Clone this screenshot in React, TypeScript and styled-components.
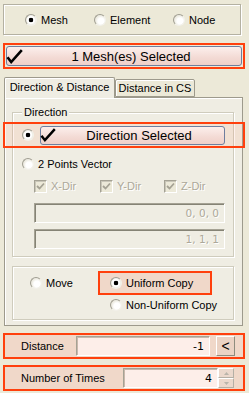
import React from 'react';
import styled, { createGlobalStyle, css } from 'styled-components';

const ORANGE = '#FF400D';
const PEACH = '#F0D8C9';
const BG = '#ECE9D8';
const DISABLED = '#ACA899';

const Global = createGlobalStyle`
  html, body { margin: 0; padding: 0; background: ${BG}; }
  body { font-family: "Liberation Sans", "DejaVu Sans", Arial, sans-serif; font-size: 11px; color: #000; }
  * { box-sizing: border-box; }
`;

const Page = styled.div`
  width: 249px;
  height: 393px;
  overflow: hidden;
  padding-top: 4px;
  display: flex;
  flex-direction: column;
`;

const TopGroup = styled.div`
  margin-left: 3px;
  width: 238px;
  height: 31px;
  border: 1px solid #B4B1A2;
  box-shadow: inset 1px 1px 0 #fff, 1px 1px 0 #fff;
  display: flex;
  align-items: center;
  padding-left: 21px;
`;

const Option = styled.label<{ $w?: number; $disabled?: boolean }>`
  display: flex;
  align-items: center;
  gap: 4px;
  height: 16px;
  flex: none;
  width: ${p => (p.$w ? `${p.$w}px` : 'auto')};
  white-space: nowrap;
  ${p =>
    p.$disabled &&
    css`
      color: ${DISABLED};
      text-shadow: 1px 1px 0 #fff;
    `}
`;

const Radio = styled.span<{ $on?: boolean }>`
  width: 12px;
  height: 12px;
  flex: none;
  border-radius: 50%;
  border: 1px solid;
  border-color: #A09E92 #F2F1EA #F2F1EA #A09E92;
  background: ${p =>
    p.$on
      ? 'radial-gradient(circle, #000 0 2px, #fff 2.6px 3.5px, #ECEAE0 5px)'
      : 'radial-gradient(circle at 60% 60%, #fff 0 3px, #ECEAE0 5.5px)'};
`;

const CheckBox = styled.span`
  width: 13px;
  height: 13px;
  flex: none;
  border: 1px solid;
  border-color: #A5A294 #fff #fff #A5A294;
  box-shadow: inset 1px 1px 0 #C9C6B8;
  background: ${BG};
  display: flex;
  align-items: center;
  justify-content: center;
`;

const HighlightRow = styled.div<{ $fill?: string }>`
  height: 26px;
  border: 2px solid ${ORANGE};
  background: ${p => p.$fill || 'transparent'};
  display: flex;
  align-items: center;
`;

const MeshHighlight = styled(HighlightRow)`
  margin: 8px 0 0 3px;
  width: 242px;
  padding: 0 1px;
`;

const PinkButton = styled.div<{ $h: number; $size: number }>`
  flex: 1;
  height: ${p => p.$h}px;
  border: 1px solid #6E7E9E;
  border-radius: 3px;
  background: linear-gradient(#FCEFEC, #F3DAD4 60%, #EFD0C9);
  display: flex;
  align-items: center;
  font-size: ${p => p.$size}px;
`;

const ButtonText = styled.span`
  flex: 1;
  text-align: center;
  padding-right: 2px;
`;

const CheckIcon = styled.svg`
  flex: none;
  margin-left: -1px;
`;

const TabRow = styled.div`
  margin: 8px 0 -1px 4px;
  height: 21px;
  display: flex;
  align-items: flex-end;
  position: relative;
  z-index: 1;
`;

const Tab = styled.div<{ $active?: boolean; $w: number }>`
  width: ${p => p.$w}px;
  height: ${p => (p.$active ? 21 : 18)}px;
  margin-bottom: ${p => (p.$active ? 0 : 1)}px;
  border: 1px solid #9D9A8C;
  border-bottom: ${p => (p.$active ? 'none' : '1px solid #9D9A8C')};
  border-radius: 2px 2px 0 0;
  box-shadow: inset 1px 1px 0 #fff;
  background: ${p => (p.$active ? '#EFEDE3' : BG)};
  display: flex;
  align-items: center;
  justify-content: center;
  padding-bottom: ${p => (p.$active ? 2 : 0)}px;
  white-space: nowrap;
`;

const Panel = styled.div`
  margin-left: 4px;
  width: 239px;
  height: 229px;
  border: 1px solid #9D9A8C;
  box-shadow: inset 1px 1px 0 #fff;
  background: #EFEDE3;
  padding: 14px 8px 0 7px;
  display: flex;
  flex-direction: column;
`;

const Group = styled.div<{ $mt?: number }>`
  position: relative;
  margin-top: ${p => p.$mt || 0}px;
  border: 1px solid #CFCCBD;
  box-shadow: inset 1px 1px 0 #fff, 1px 1px 0 #fff;
  display: flex;
  flex-direction: column;
`;

const Legend = styled.span`
  position: absolute;
  top: -7px;
  left: 9px;
  padding: 0 2px;
  background: #EFEDE3;
  line-height: 13px;
`;

const DirHighlight = styled(HighlightRow)`
  margin: 9px -12px 0 -10px;
  padding: 0 18px 0 17px;
  gap: 6px;
`;

const IndentRow = styled.div<{ $mt: number; $pl: number }>`
  display: flex;
  align-items: center;
  margin-top: ${p => p.$mt}px;
  padding-left: ${p => p.$pl}px;
`;

const VecField = styled.div<{ $mt: number }>`
  margin: ${p => p.$mt}px 8px 0 21px;
  height: 20px;
  border: 1px solid;
  border-color: #A5A294 #fff #fff #A5A294;
  box-shadow: inset 1px 1px 0 #858375;
  display: flex;
  align-items: center;
  justify-content: flex-end;
  padding-right: 5px;
  color: ${DISABLED};
  text-shadow: 1px 1px 0 #fff;
  font-family: "DejaVu Sans", sans-serif;
  font-size: 10.5px;
`;

const MoveRow = styled.div`
  display: flex;
  align-items: center;
  margin-top: 4px;
  padding-left: 17px;
`;

const UniformBox = styled(HighlightRow)`
  width: 114px;
  height: 24px;
  padding-left: 10px;
`;

const ParamRow = styled(HighlightRow)`
  margin: 0 0 0 3px;
  width: 242px;
  padding-left: 16px;
`;

const ParamLabel = styled.span<{ $w: number }>`
  width: ${p => p.$w}px;
  flex: none;
`;

const Input = styled.div<{ $w: number }>`
  width: ${p => p.$w}px;
  height: 20px;
  flex: none;
  border: 1px solid;
  border-color: #A5A294 #fff #fff #A5A294;
  box-shadow: inset 1px 1px 0 #C9B8AC;
  background: #FDEEE9;
  display: flex;
  align-items: center;
  justify-content: flex-end;
  padding-right: 5px;
  font-family: "DejaVu Sans", sans-serif;
  font-size: 11px;
`;

const SmallButton = styled.div`
  margin-left: 6px;
  width: 19px;
  height: 20px;
  border: 1px solid;
  border-color: #fff #8F8C7E #8F8C7E #fff;
  background: #EBD3C4;
  display: flex;
  align-items: center;
  justify-content: center;
  font-size: 14px;
  padding-bottom: 1px;
`;

const Spin = styled.div`
  width: 16px;
  height: 20px;
  display: flex;
  flex-direction: column;
`;

const SpinHalf = styled.div`
  flex: 1;
  border: 1px solid;
  border-color: #fff #B5AFA5 #B5AFA5 #fff;
  background: #EBD8CC;
  display: flex;
  align-items: center;
  justify-content: center;
`;

const DistSpacer = styled.div`
  height: 7px;
  flex: none;
`;
const NumSpacer = styled.div`
  height: 6px;
  flex: none;
`;

const BigCheck = ({ w = 17, h = 15 }: { w?: number; h?: number }) => (
  <CheckIcon width={w} height={h} viewBox="0 0 17 15">
    <path d="M1.5 8.2 L5.2 13 L15.8 1.2" fill="none" stroke="#000" strokeWidth="2.6" strokeLinejoin="miter" strokeLinecap="butt" />
  </CheckIcon>
);

const SmallCheck = () => (
  <svg width="9" height="9" viewBox="0 0 9 9">
    <path d="M1 4 L3.5 6.5 L8 1.5" fill="none" stroke="#A5A294" strokeWidth="1.8" />
  </svg>
);

const Tri = ({ up }: { up?: boolean }) => (
  <svg width="5" height="3" viewBox="0 0 5 3">
    <path d={up ? 'M0 3 L2.5 0 L5 3 Z' : 'M0 0 L2.5 3 L5 0 Z'} fill="#B9B4AA" />
  </svg>
);

export default function App() {
  return (
    <Page>
      <Global />
      <TopGroup>
        <Option $w={69}>
          <Radio $on />
          Mesh
        </Option>
        <Option $w={79}>
          <Radio />
          Element
        </Option>
        <Option>
          <Radio />
          Node
        </Option>
      </TopGroup>

      <MeshHighlight>
        <PinkButton $h={20} $size={13}>
          <BigCheck />
          <ButtonText>1 Mesh(es) Selected</ButtonText>
        </PinkButton>
      </MeshHighlight>

      <TabRow>
        <Tab $active $w={111}>Direction &amp; Distance</Tab>
        <Tab $w={80}>Distance in CS</Tab>
      </TabRow>
      <Panel>
        <Group>
          <Legend>Direction</Legend>
          <DirHighlight $fill="rgba(255, 150, 110, 0.13)">
            <Radio $on />
            <PinkButton $h={19} $size={13}>
              <BigCheck w={16} h={14} />
              <ButtonText>Direction Selected</ButtonText>
            </PinkButton>
          </DirHighlight>
          <IndentRow $mt={8} $pl={9}>
            <Option>
              <Radio />
              2 Points Vector
            </Option>
          </IndentRow>
          <IndentRow $mt={6} $pl={21}>
            <Option $w={66} $disabled>
              <CheckBox><SmallCheck /></CheckBox>
              X-Dir
            </Option>
            <Option $w={64} $disabled>
              <CheckBox><SmallCheck /></CheckBox>
              Y-Dir
            </Option>
            <Option $disabled>
              <CheckBox><SmallCheck /></CheckBox>
              Z-Dir
            </Option>
          </IndentRow>
          <VecField $mt={9}>0, 0, 0</VecField>
          <VecField $mt={6}>1, 1, 1</VecField>
          <DistSpacer />
        </Group>

        <Group $mt={9}>
          <MoveRow>
            <Option $w={68}>
              <Radio />
              Move
            </Option>
            <UniformBox $fill={PEACH}>
              <Option>
                <Radio $on />
                Uniform Copy
              </Option>
            </UniformBox>
          </MoveRow>
          <IndentRow $mt={2} $pl={97}>
            <Option>
              <Radio />
              Non-Uniform Copy
            </Option>
          </IndentRow>
          <NumSpacer />
        </Group>
      </Panel>

      <DistSpacer />
      <ParamRow $fill={PEACH}>
        <ParamLabel $w={55}>Distance</ParamLabel>
        <Input $w={134}>-1</Input>
        <SmallButton>&lt;</SmallButton>
      </ParamRow>
      <NumSpacer />
      <ParamRow $fill={PEACH}>
        <ParamLabel $w={102}>Number of Times</ParamLabel>
        <Input $w={95}>4</Input>
        <Spin>
          <SpinHalf><Tri up /></SpinHalf>
          <SpinHalf><Tri /></SpinHalf>
        </Spin>
      </ParamRow>
    </Page>
  );
}
